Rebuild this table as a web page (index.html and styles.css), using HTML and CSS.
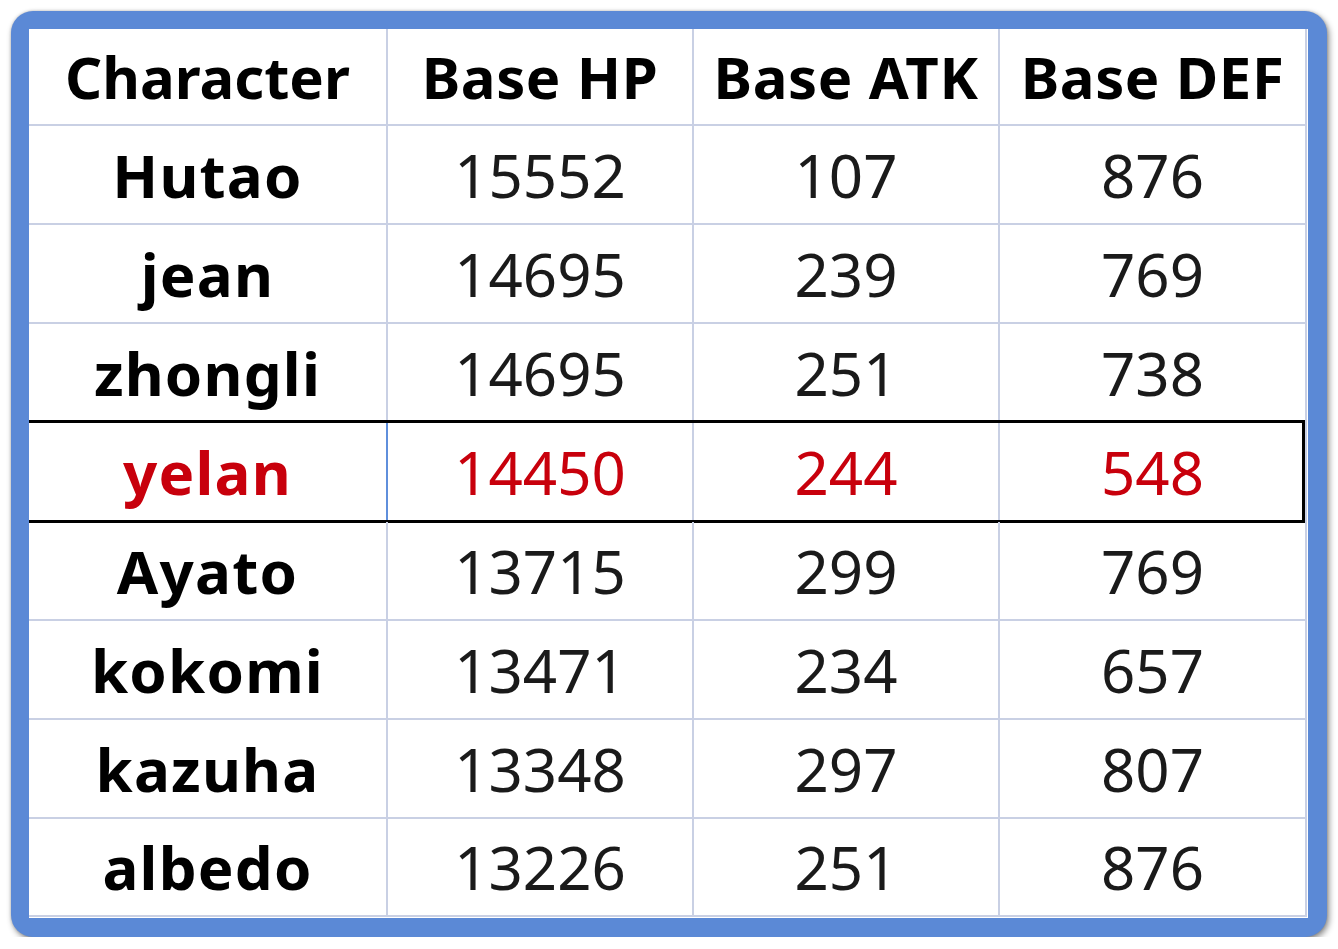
FILE: index.html
```html
<!DOCTYPE html>
<html lang="en">
<head>
<meta charset="utf-8">
<title>Character stats</title>
<link rel="stylesheet" href="styles.css">
</head>
<body>
<div class="frame">
  <div class="sheet">
    <div class="row head">
      <div class="cell">Character</div>
      <div class="cell">Base HP</div>
      <div class="cell">Base ATK</div>
      <div class="cell">Base DEF</div>
    </div>
    <div class="row">
      <div class="cell name">Hutao</div>
      <div class="cell">15552</div>
      <div class="cell">107</div>
      <div class="cell">876</div>
    </div>
    <div class="row">
      <div class="cell name">jean</div>
      <div class="cell">14695</div>
      <div class="cell">239</div>
      <div class="cell">769</div>
    </div>
    <div class="row">
      <div class="cell name">zhongli</div>
      <div class="cell">14695</div>
      <div class="cell">251</div>
      <div class="cell">738</div>
    </div>
    <div class="row sel">
      <div class="cell name">yelan</div>
      <div class="cell">14450</div>
      <div class="cell">244</div>
      <div class="cell">548</div>
    </div>
    <div class="row">
      <div class="cell name">Ayato</div>
      <div class="cell">13715</div>
      <div class="cell">299</div>
      <div class="cell">769</div>
    </div>
    <div class="row">
      <div class="cell name">kokomi</div>
      <div class="cell">13471</div>
      <div class="cell">234</div>
      <div class="cell">657</div>
    </div>
    <div class="row">
      <div class="cell name">kazuha</div>
      <div class="cell">13348</div>
      <div class="cell">297</div>
      <div class="cell">807</div>
    </div>
    <div class="row last">
      <div class="cell name">albedo</div>
      <div class="cell">13226</div>
      <div class="cell">251</div>
      <div class="cell">876</div>
    </div>
  </div>
</div>
</body>
</html>
```

FILE: styles.css
```css
html, body {
  margin: 0;
  padding: 0;
  background: #ffffff;
}

body {
  font-family: "Noto Sans", "Open Sans", "Liberation Sans", sans-serif;
  color: #1a1a1a;
}

.frame {
  margin: 11px 0 0 11px;
  width: 1316px;
  height: 926px;
  box-sizing: border-box;
  padding: 18px 19px 19px 18px;
  background: #5b89d6;
  border-radius: 22px;
  box-shadow: 2px 3px 6px rgba(0, 0, 0, 0.45), 0 0 3px rgba(0, 0, 0, 0.2);
}

.sheet {
  width: 1279px;
  height: 889px;
  background: #ffffff;
  display: flex;
  flex-direction: column;
}

.row {
  position: relative;
  display: grid;
  grid-template-columns: 359px 306px 306px 307px;
  height: 99px;
  flex: none;
}

.row.head {
  height: 97px;
}

.row.last {
  height: 98px;
}

.cell {
  box-sizing: border-box;
  border-right: 2px solid #c9d0e4;
  border-bottom: 2px solid #c9d0e4;
  display: flex;
  align-items: center;
  justify-content: center;
  font-size: 60px;
  line-height: 1;
  white-space: nowrap;
}

.head .cell {
  font-size: 58px;
  font-weight: 700;
  letter-spacing: 0.6px;
  color: #000000;
  padding-top: 0;
}

.head .cell:first-child {
  letter-spacing: 0;
}

.cell.name {
  font-size: 60px;
  font-weight: 700;
  letter-spacing: 1.2px;
  color: #000000;
}

.row.sel .cell {
  color: #c8000c;
}

.row.sel .cell.name {
  border-right-color: #5f8fdc;
}

.row.sel::after {
  content: "";
  position: absolute;
  left: 0;
  right: 3px;
  top: -3px;
  bottom: -1px;
  border: 3px solid #000000;
  border-left: 0;
  pointer-events: none;
}
```
